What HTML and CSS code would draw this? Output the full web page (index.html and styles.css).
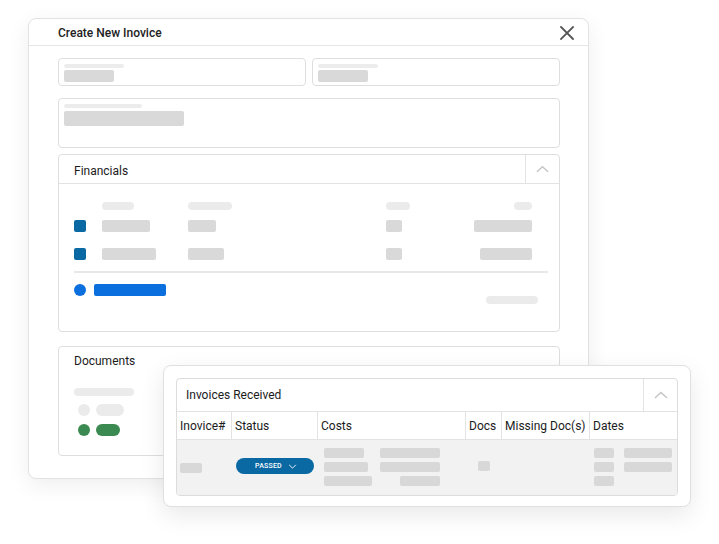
FILE: index.html
```html
<!DOCTYPE html>
<html lang="en">
<head>
<meta charset="utf-8">
<title>Create New Inovice</title>
<link rel="stylesheet" href="styles.css">
</head>
<body>
<div class="stage">
  <div class="modal">
    <div class="modal-head">
      <span class="modal-title">Create New Inovice</span>
      <svg class="close" viewBox="0 0 14 14" width="14" height="14" aria-hidden="true">
        <path d="M1 1 L13 13 M13 1 L1 13" stroke="#555" stroke-width="1.8" stroke-linecap="square" fill="none"/>
      </svg>
    </div>
    <div class="modal-body">
      <div class="field-row">
        <div class="field">
          <div class="ph ph-label w60"></div>
          <div class="ph ph-value w50"></div>
        </div>
        <div class="field">
          <div class="ph ph-label w60"></div>
          <div class="ph ph-value w50"></div>
        </div>
      </div>
      <div class="field field-tall">
        <div class="ph ph-label w78"></div>
        <div class="ph ph-value-lg"></div>
      </div>

      <section class="panel fin">
        <div class="panel-head">
          <span class="panel-title">Financials</span>
          <div class="chev-cell">
            <svg viewBox="0 0 14 8" width="13" height="8" aria-hidden="true"><path d="M1 7 L7 1.5 L13 7" stroke="#c6c6c6" stroke-width="1.6" fill="none"/></svg>
          </div>
        </div>
        <div class="fin-body">
          <div class="fin-row fin-row-head">
            <span></span>
            <span class="pill light" style="width:32px"></span>
            <span class="pill light" style="width:44px"></span>
            <span class="pill light" style="width:24px"></span>
            <span class="pill light end" style="width:18px"></span>
          </div>
          <div class="fin-row fin-row-1">
            <span class="sq"></span>
            <span class="blk" style="width:48px"></span>
            <span class="blk" style="width:28px"></span>
            <span class="blk" style="width:16px"></span>
            <span class="blk end" style="width:58px"></span>
          </div>
          <div class="fin-row fin-row-2">
            <span class="sq"></span>
            <span class="blk" style="width:54px"></span>
            <span class="blk" style="width:36px"></span>
            <span class="blk" style="width:16px"></span>
            <span class="blk end" style="width:52px"></span>
          </div>
          <div class="divider"></div>
          <div class="fin-total">
            <span class="dot-blue"></span>
            <span class="bar-blue"></span>
            <span class="pill light total-note"></span>
          </div>
        </div>
      </section>

      <section class="panel docs">
        <div class="docs-head"><span class="panel-title">Documents</span></div>
        <div class="docs-body">
          <div class="pill light" style="width:60px"></div>
          <div class="doc-item">
            <span class="dot light-dot"></span><span class="doc-pill light-pill" style="width:28px"></span>
          </div>
          <div class="doc-item">
            <span class="dot green-dot"></span><span class="doc-pill green-pill" style="width:24px"></span>
          </div>
        </div>
      </section>
    </div>
  </div>

  <div class="invoice-card">
    <div class="inv-panel">
      <div class="inv-head">
        <span class="panel-title">Invoices Received</span>
        <div class="inv-chev">
          <svg viewBox="0 0 14 8" width="14" height="8" aria-hidden="true"><path d="M1 7 L7 1.5 L13 7" stroke="#c6c6c6" stroke-width="1.6" fill="none"/></svg>
        </div>
      </div>
      <div class="inv-cols">
        <div class="th">Inovice#</div>
        <div class="th">Status</div>
        <div class="th">Costs</div>
        <div class="th">Docs</div>
        <div class="th">Missing Doc(s)</div>
        <div class="th last">Dates</div>
      </div>
      <div class="inv-data">
        <div class="td td-num"><span class="blk" style="width:22px;height:10px"></span></div>
        <div class="td td-status">
          <span class="status-pill">PASSED
            <svg viewBox="0 0 10 6" width="9" height="5" aria-hidden="true"><path d="M1 1 L5 5 L9 1" stroke="#fff" stroke-width="1.1" fill="none"/></svg>
          </span>
        </div>
        <div class="td td-costs">
          <div class="stack">
            <span class="blk b10" style="width:40px"></span>
            <span class="blk b10" style="width:44px"></span>
            <span class="blk b10" style="width:48px"></span>
          </div>
          <div class="stack right">
            <span class="blk b10" style="width:60px"></span>
            <span class="blk b10" style="width:60px"></span>
            <span class="blk b10" style="width:40px"></span>
          </div>
        </div>
        <div class="td td-docs"><span class="blk b10" style="width:12px"></span></div>
        <div class="td"></div>
        <div class="td td-dates">
          <div class="stack">
            <span class="blk b10" style="width:20px"></span>
            <span class="blk b10" style="width:20px"></span>
            <span class="blk b10" style="width:20px"></span>
          </div>
          <div class="stack">
            <span class="blk b10" style="width:48px"></span>
            <span class="blk b10" style="width:48px"></span>
          </div>
        </div>
      </div>
    </div>
  </div>
</div>
</body>
</html>
```

FILE: styles.css
```css
* { box-sizing: border-box; }
html, body { margin: 0; padding: 0; background: #fff; }
body {
  width: 719px;
  height: 544px;
  overflow: hidden;
  font-family: Roboto, "Liberation Sans", Arial, sans-serif;
  color: #1b1b1b;
  font-size: 12px;
}
.stage {
  position: relative;
  width: 719px;
  height: 544px;
  padding: 18px 0 0 28px;
}

/* ---------- modal ---------- */
.modal {
  width: 561px;
  height: 461px;
  background: #fff;
  border: 1px solid #e2e2e2;
  border-radius: 8px;
  box-shadow: 0 6px 22px rgba(0, 0, 0, 0.07);
  overflow: hidden;
}
.modal-head {
  height: 27px;
  border-bottom: 1px solid #e6e6e6;
  display: flex;
  align-items: center;
  justify-content: space-between;
  padding: 0 14px 0 29px;
}
.modal-title {
  font-size: 12px;
  font-weight: 500;
  color: #222;
  margin-top: 1px;
}
.close { display: block; margin-top: 1px; }
.modal-body {
  padding: 12px 28px 0 29px;
}

/* ---------- placeholder shapes ---------- */
.ph { border-radius: 2px; }
.ph-label { height: 4px; background: #ececec; border-radius: 2px; }
.ph-value { height: 12px; background: #d9d9d9; margin-top: 2px; }
.ph-value-lg { width: 120px; height: 15px; background: #d9d9d9; margin-top: 3px; border-radius: 2px; }
.w50 { width: 50px; }
.w60 { width: 60px; }
.w78 { width: 78px; }

.pill { display: block; height: 8px; border-radius: 4px; }
.light { background: #ebebeb; }
.blk { display: block; height: 12px; background: #d9d9d9; border-radius: 2px; }
.b10 { height: 10px; }

/* ---------- fields ---------- */
.field-row {
  display: grid;
  grid-template-columns: 1fr 1fr;
  gap: 6px;
  margin-bottom: 12px;
}
.field {
  height: 28px;
  border: 1px solid #dedede;
  border-radius: 4px;
  padding: 5px 5px;
}
.field-tall {
  height: 50px;
  margin-bottom: 6px;
}

/* ---------- panels ---------- */
.panel {
  border: 1px solid #dedede;
  border-radius: 4px;
}
.panel-title {
  font-size: 12px;
  font-weight: 400;
  color: #1b1b1b;
}
.panel-head {
  height: 29px;
  border-bottom: 1px solid #e3e3e3;
  display: flex;
  align-items: center;
  justify-content: space-between;
  padding-left: 15px;
}
.panel-head .panel-title { margin-top: 3px; }
.chev-cell {
  width: 34px;
  height: 100%;
  border-left: 1px solid #e3e3e3;
  display: flex;
  align-items: center;
  justify-content: center;
}
.chev-cell svg { display: block; }

.fin { height: 178px; margin-bottom: 14px; }
.fin-body {
  padding: 18px 11px 0 15px;
}
.fin-row {
  display: grid;
  grid-template-columns: 28px 86px 198px 40px 1fr;
  align-items: center;
  margin-right: 16px;
}
.fin-row .end { justify-self: end; }
.fin-row-head { height: 8px; }
.fin-row-1 { height: 12px; margin-top: 10px; }
.fin-row-2 { height: 12px; margin-top: 16px; }
.sq { display: block; width: 12px; height: 12px; background: #0a69a3; border-radius: 2px; }
.divider { height: 2px; background: #e8e8e8; margin-top: 11px; }
.fin-total {
  display: flex;
  align-items: flex-start;
  height: 20px;
  margin-top: 11px;
}
.dot-blue { width: 12px; height: 12px; border-radius: 50%; background: #0b6fde; }
.bar-blue { width: 72px; height: 12px; border-radius: 2px; background: #0b6fde; margin-left: 8px; }
.total-note { width: 52px; margin-left: auto; margin-right: 10px; align-self: flex-end; }

.docs { height: 110px; }
.docs-head {
  height: 27px;
  display: flex;
  align-items: center;
  padding-left: 15px;
}
.docs-body { padding: 14px 0 0 15px; }
.doc-item {
  display: flex;
  align-items: center;
  margin-left: 4px;
  height: 12px;
  margin-top: 8px;
}
.dot { width: 12px; height: 12px; border-radius: 50%; }
.doc-pill { height: 12px; border-radius: 6px; margin-left: 6px; }
.light-dot, .light-pill { background: #ebebeb; }
.green-dot, .green-pill { background: #3b8a51; }

/* ---------- invoice card (floating over the modal) ---------- */
.invoice-card {
  position: absolute;
  left: 163px;
  top: 365px;
  width: 528px;
  height: 142px;
  background: #fff;
  border: 1px solid #e0e0e0;
  border-radius: 8px;
  box-shadow: 0 8px 24px rgba(0, 0, 0, 0.09);
  padding: 12px;
}
.inv-panel {
  border: 1px solid #dcdcdc;
  border-radius: 4px;
  height: 118px;
  overflow: hidden;
}
.inv-head {
  height: 33px;
  border-bottom: 1px solid #e3e3e3;
  display: flex;
  align-items: center;
  justify-content: space-between;
  padding-left: 9px;
}
.inv-chev {
  width: 34px;
  height: 100%;
  border-left: 1px solid #e3e3e3;
  display: flex;
  align-items: center;
  justify-content: center;
}
.inv-chev svg { display: block; }
.inv-cols, .inv-data {
  display: grid;
  grid-template-columns: 55px 86px 148px 36px 88px 1fr;
}
.inv-cols {
  height: 28px;
  border-bottom: 1px solid #e3e3e3;
}
.th {
  display: flex;
  align-items: center;
  padding-left: 3px;
  border-right: 1px solid #e3e3e3;
  font-size: 12px;
  color: #1b1b1b;
  white-space: nowrap;
}
.th.last { border-right: none; }
.inv-data {
  height: 56px;
  background: #f2f2f2;
}
.td {
  display: flex;
  align-items: center;
}
.td .blk { background: #d8d8d8; }
.td-num { padding-left: 3px; }
.td-status { padding-left: 4px; }
.status-pill {
  display: flex;
  align-items: center;
  justify-content: center;
  gap: 6px;
  width: 78px;
  height: 16px;
  border-radius: 8px;
  background: #0a69a3;
  color: #fff;
  font-size: 7px;
  font-weight: 500;
  letter-spacing: 0.2px;
  margin-top: -4px;
  padding-left: 2px;
}
.status-pill svg { display: block; }
.td-costs {
  align-items: flex-start;
  padding: 8px 0 0 6px;
}
.stack {
  display: flex;
  flex-direction: column;
  gap: 4px;
}
.stack.right { align-items: flex-end; width: 60px; margin-left: 8px; }
.td-docs { justify-content: center; margin-top: -4px; }
.td-dates {
  align-items: flex-start;
  padding: 8px 0 0 4px;
  gap: 10px;
}
```
